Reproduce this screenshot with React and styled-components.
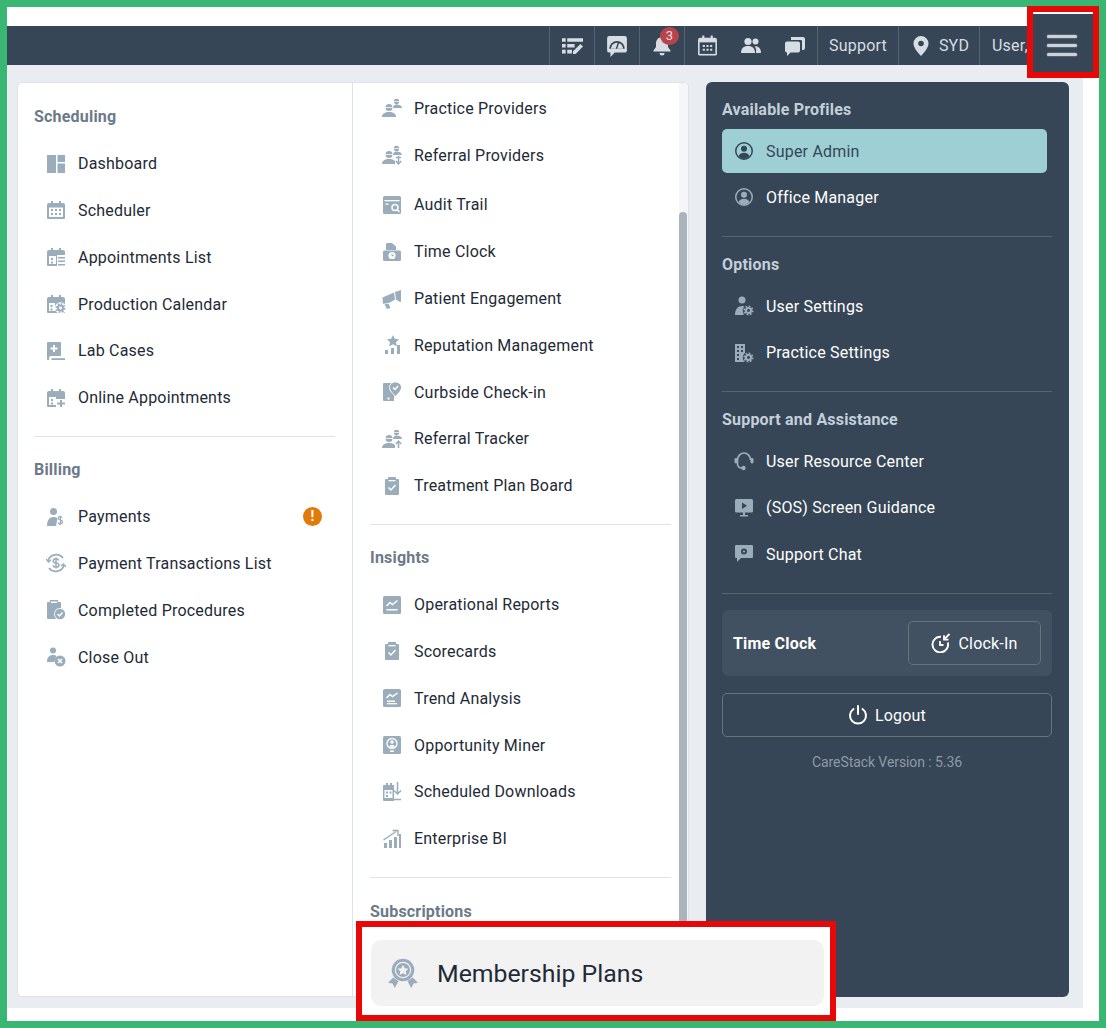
import React from 'react';
import styled, { createGlobalStyle } from 'styled-components';

const GlobalStyle = createGlobalStyle`
	* { box-sizing: border-box; }
	body {
		margin: 0;
		background: #fff;
		font-family: Roboto, "Liberation Sans", sans-serif;
		font-size: 16px;
		letter-spacing: 0.2px;
	}
`;

// cut-outs inside a glyph take the colour of whatever is behind the icon
const Cut = props => <rect fill="var(--cut)" {...props} />;
const CutPath = props => <path fill="var(--cut)" {...props} />;

const CalendarBase = () => (
	<>
		<path d="M1 5a2 2 0 0 1 2-2h14a2 2 0 0 1 2 2v13a1 1 0 0 1-1 1H2a1 1 0 0 1-1-1z" />
		<rect x="5" y="1" width="2" height="3" />
		<rect x="13" y="1" width="2" height="3" />
	</>
);

const Gear = ({ x, y, r = 4.6 }) => (
	<>
		<circle cx={x} cy={y} r={r + 1.2} fill="var(--cut)" />
		<circle cx={x} cy={y} r={r * 0.78} />
		<circle cx={x} cy={y} r={r * 0.9} fill="none" stroke="currentColor" strokeWidth="1.800" strokeDasharray="1.700 1.500" />
		<circle cx={x} cy={y} r={r * 0.32} fill="var(--cut)" />
	</>
);

const Providers = () => (
	<>
		<circle cx="7" cy="9.500" r="3.500" />
		<Cut x="2" y="9" width="10" height="0.800" />
		<path d="M0 19c0-3.500 3-5 7-5s7 1.500 7 5z" />
		<circle cx="14.500" cy="3.500" r="2.700" />
		<Cut x="10" y="3.100" width="10" height="0.700" />
		<path d="M11 10c0-2 1.500-3.500 3.500-3.500s5.500 1 5.500 3.500z" />
	</>
);

const glyphs = {
	dashboard: (
		<>
			<rect x="1" y="1" width="9" height="18" />
			<rect x="11.500" y="1" width="7.500" height="7" />
			<rect x="11.500" y="9.500" width="7.500" height="9.500" />
		</>
	),
	scheduler: (
		<>
			<CalendarBase />
			<Cut x="3" y="7.500" width="14" height="9.500" />
			<path d="M5 9h2v2H5zM9 9h2v2H9zM13 9h2v2h-2zM5 13h2v2H5zM9 13h2v2H9zM13 13h2v2h-2z" />
		</>
	),
	appointments: (
		<>
			<CalendarBase />
			<Cut x="3" y="9" width="7" height="8" />
			<Cut x="11" y="8" width="9" height="12" />
			<path d="M5 11h2v2H5zM5 14.500h2v2H5zM12 10h7v1.500h-7zM12 13.500h7V15h-7zM12 17h7v1.500h-7z" />
		</>
	),
	production: (
		<>
			<CalendarBase />
			<Cut x="3" y="9" width="6" height="8" />
			<path d="M4.500 11h2v2h-2zM4.500 14.500h2v2h-2z" />
			<Gear x="14.500" y="14" />
		</>
	),
	lab: (
		<>
			<path d="M1 2a1 1 0 0 1 1-1h12a1 1 0 0 1 1 1v13H5a2 2 0 0 0-2 2v2H2a1 1 0 0 1-1-1z" />
			<path d="M5.500 17.200h13.500V19H5.500z" />
			<CutPath d="M7 4h2v2.500h2.500v2H9V11H7V8.500H4.500v-2H7z" />
		</>
	),
	online: (
		<>
			<CalendarBase />
			<Cut x="3" y="9" width="7" height="8" />
			<Cut x="10" y="11" width="10" height="9" />
			<path d="M5 11h2v2H5zM5 14.500h2v2H5zM14 12h2v2.500h3v2h-3V19h-2v-2.500h-3v-2h3z" />
		</>
	),
	payments: (
		<>
			<circle cx="7.500" cy="4.500" r="3.500" />
			<path d="M1 19c0-6 2.500-9 6.500-9 1.800 0 3 .5 4 1.500L10 19z" />
			<path d="M16 10.500a2 2 0 0 0-3.800.500c0 2.300 4.300 1.500 4.300 4a2.200 2.200 0 0 1-4.300.500M14.500 9v9" fill="none" stroke="currentColor" strokeWidth="1.300" />
		</>
	),
	transactions: (
		<g fill="none" stroke="currentColor" strokeWidth="1.800">
			<path d="M2 8a8.500 8.500 0 0 1 15-3" />
			<path d="M18 12a8.500 8.500 0 0 1-15 3" />
			<path d="M12.800 7.500c-.5-1.200-1.500-1.700-2.800-1.700-1.500 0-2.800.8-2.800 2.100 0 3 5.800 1.300 5.800 4.200 0 1.300-1.300 2.100-3 2.100-1.400 0-2.500-.6-3-1.800M10 4.500v11" strokeWidth="1.500" />
			<path d="M0 6l2.500 3L5 7" strokeWidth="1.400" />
			<path d="M20 14l-2.500-3L15 13" strokeWidth="1.400" />
		</g>
	),
	completed: (
		<>
			<path d="M1 3a1 1 0 0 1 1-1h2V0h8v2h2a1 1 0 0 1 1 1v16H2a1 1 0 0 1-1-1z" />
			<Cut x="5" y="1.500" width="6" height="1.500" />
			<circle cx="14" cy="14" r="6" fill="var(--cut)" />
			<circle cx="14" cy="14" r="5.200" />
			<path d="M11.500 14l2 2 3-3.500" fill="none" stroke="var(--cut)" strokeWidth="1.400" />
		</>
	),
	closeout: (
		<>
			<circle cx="7" cy="3.500" r="3" />
			<path d="M1 15c0-5 2.500-7 6-7 1.500 0 2.500.3 3.500 1L8 15z" />
			<circle cx="14" cy="14" r="5.500" />
			<path d="M12 12l4 4M16 12l-4 4" stroke="var(--cut)" strokeWidth="1.500" />
		</>
	),
	practice: <Providers />,
	referral: (
		<>
			<Providers />
			<Cut x="13" y="10" width="7" height="10" />
			<path d="M16.500 11v8M13.800 16l2.700 3 2.700-3M14 12.500h5" fill="none" stroke="currentColor" strokeWidth="1.500" />
		</>
	),
	audit: (
		<>
			<rect x="1" y="1" width="18" height="18" rx="1.500" />
			<Cut x="2.500" y="5" width="15" height="1.300" />
			<Cut x="3.500" y="8.500" width="3" height="1.300" />
			<circle cx="13" cy="12.500" r="3" fill="none" stroke="var(--cut)" strokeWidth="1.500" />
			<path d="M15 14.500l2.500 2.500" stroke="var(--cut)" strokeWidth="1.500" />
		</>
	),
	timeclock: (
		<>
			<path d="M4 8V2a1 1 0 0 1 1-1h5l4 3.500V8z" />
			<rect x="1" y="8.500" width="18" height="10.500" rx="1.500" />
			<circle cx="10" cy="13.500" r="3.600" fill="var(--cut)" />
			<path d="M10 11.500v2.200h2" fill="none" stroke="currentColor" strokeWidth="1" />
		</>
	),
	engagement: (
		<>
			<path d="M19 1v11.500l-1 .500-4-2.500L13 3z" />
			<path d="M12 3.500l1 7-5 3-7 1.500-.500-6.500z" />
			<path d="M2.500 15.500l4-1 2 4.500-3.500 1z" />
		</>
	),
	reputation: (
		<>
			<path d="M11 0l1.800 3.800 4.200.5-3 2.900.8 4.200L11 9.300l-3.800 2.100.8-4.200-3-2.900 4.200-.5z" />
			<path d="M3 15h3v4H3zM9 13h3v6H9zM15 10h3v9h-3z" />
		</>
	),
	curbside: (
		<>
			<path d="M1 2a1 1 0 0 1 1-1h10v18H2a1 1 0 0 1-1-1z" />
			<rect x="5.500" y="15.500" width="2" height="2" fill="var(--cut)" />
			<path d="M13.500 0c3.500 0 6 2.500 6 5.500 0 3.500-3.500 6-6 9-2.500-3-6-5.500-6-9 0-3 2.500-5.500 6-5.500z" stroke="var(--cut)" strokeWidth="1" />
			<path d="M11 5.500l2 2 3-3.500" fill="none" stroke="var(--cut)" strokeWidth="1.400" />
		</>
	),
	tracker: (
		<>
			<Providers />
			<Cut x="13" y="10" width="7" height="10" />
			<path d="M16.500 19v-7M13.800 15l2.700-3 2.700 3" fill="none" stroke="currentColor" strokeWidth="1.500" />
		</>
	),
	clipboard: (
		<>
			<path d="M3 4a1 1 0 0 1 1-1h2V1h8v2h2a1 1 0 0 1 1 1v14a1 1 0 0 1-1 1H4a1 1 0 0 1-1-1z" />
			<Cut x="6.500" y="4" width="7" height="1.300" />
			<path d="M6.500 11.500l2.500 2.500 4.500-5" fill="none" stroke="var(--cut)" strokeWidth="1.500" />
		</>
	),
	reports: (
		<>
			<rect x="1" y="1" width="18" height="18" rx="1.500" />
			<path d="M4.500 11l3.500-3.500 2.500 2L15.500 5.500" fill="none" stroke="var(--cut)" strokeWidth="1.500" />
			<Cut x="4.500" y="14" width="11" height="1.500" />
		</>
	),
	trend: (
		<>
			<rect x="1" y="1" width="18" height="18" rx="1.500" />
			<path d="M4.500 10l3.500-3.500 2.500 2 5-3.500" fill="none" stroke="var(--cut)" strokeWidth="1.500" />
			<Cut x="5" y="12.500" width="8" height="1.500" />
			<Cut x="5" y="15" width="10" height="1.300" />
		</>
	),
	miner: (
		<>
			<rect x="1" y="1" width="18" height="18" rx="1.500" />
			<circle cx="10" cy="8.500" r="5" fill="none" stroke="var(--cut)" strokeWidth="1.300" />
			<circle cx="10" cy="7" r="1.800" fill="var(--cut)" />
			<path d="M7 12.500c.5-2 1.500-2.500 3-2.500s2.500.5 3 2.500zM8 15.500h4V17H8z" fill="var(--cut)" />
		</>
	),
	downloads: (
		<>
			<path d="M1 4a1 1 0 0 1 1-1h10v16H2a1 1 0 0 1-1-1z" />
			<rect x="4" y="1" width="2" height="3" />
			<rect x="8" y="1" width="2" height="3" />
			<Cut x="2.500" y="8" width="8" height="8" />
			<path d="M4 9.500h2v2H4zM7.500 9.500h2v2h-2zM4 13h2v2H4z" />
			<path d="M15.500 0v12M12 8.500l3.500 3.500L19 8.500M8 17.500h11" fill="none" stroke="currentColor" strokeWidth="1.500" />
		</>
	),
	bi: (
		<>
			<path d="M2 14h3v5H2zM7 11h3v8H7zM12 8h3v11h-3z" />
			<path d="M17 5h2v14h-2z" />
			<path d="M1.500 11L14 2.500M10.500 1.500H16V7" fill="none" stroke="currentColor" strokeWidth="1.400" />
		</>
	),
	profile: (
		<>
			<path fillRule="evenodd" d="M10 1a9 9 0 1 1 0 18 9 9 0 0 1 0-18zm0 1.500a7.500 7.500 0 1 0 0 15 7.500 7.500 0 0 0 0-15z" />
			<circle cx="10" cy="7.800" r="3" />
			<path d="M4.500 15c1.200-2.300 3.200-3.200 5.500-3.200s4.300.9 5.500 3.200A7.500 7.500 0 0 1 10 18a7.500 7.500 0 0 1-5.500-3z" />
		</>
	),
	usersettings: (
		<>
			<circle cx="8" cy="4" r="3.500" />
			<path d="M1 19c0-6 3-9 7-9 1.500 0 2.500.4 3.500 1L9.500 19z" />
			<Gear x="14.500" y="14.500" />
		</>
	),
	practicesettings: (
		<>
			<path d="M1 1h10v18H1z" />
			<path d="M3 3h2v2H3zM7 3h2v2H7zM3 7h2v2H3zM7 7h2v2H7zM3 11h2v2H3zM3 15h2v2H3z" fill="var(--cut)" />
			<Gear x="14.500" y="14.500" />
		</>
	),
	resource: (
		<>
			<path d="M3.500 9a6.500 7 0 0 1 13 0" fill="none" stroke="currentColor" strokeWidth="1.700" />
			<path d="M3.500 9v4a4 4 0 0 0 4 4h2" fill="none" stroke="currentColor" strokeWidth="1.700" />
			<rect x="0.500" y="7" width="3" height="5.500" rx="1.400" />
			<rect x="16.500" y="7" width="3" height="5.500" rx="1.400" />
			<circle cx="9.500" cy="17" r="2.200" />
		</>
	),
	screen: (
		<>
			<rect x="1" y="1" width="18" height="13.500" rx="1.500" />
			<path d="M8 4.500l5 3.200-5 3.200z" fill="var(--cut)" />
			<path d="M9 14h2v3h3v1.500H6V17h3z" />
		</>
	),
	chat: (
		<>
			<path d="M2 1h16a1 1 0 0 1 1 1v11a1 1 0 0 1-1 1H7l-4 4v-4H2a1 1 0 0 1-1-1V2a1 1 0 0 1 1-1z" />
			<circle cx="10" cy="7.500" r="3" fill="var(--cut)" />
			<circle cx="10" cy="7.500" r="1.100" />
		</>
	),
	table: (
		<>
			<path d="M0 3h3.500v3.500H0zM5 3h15v3.500H5zM0 8.500h3.500V12H0zM5 8.500h7V12H5zM0 14h3.500v3.500H0zM5 14h4.500v3.500H5z" />
			<path d="M10.500 15.500l7-7 2.500 2.500-7 7h-2.500z" />
		</>
	),
	gauge: (
		<>
			<path d="M3 1h14a2 2 0 0 1 2 2v11a2 2 0 0 1-2 2H8l-4 4v-4H3a2 2 0 0 1-2-2V3a2 2 0 0 1 2-2z" />
			<path d="M3 12.500a7 7 0 1 1 14 0z" fill="var(--cut)" />
			<path d="M4.500 12.500a5.500 5.500 0 1 1 11 0z" />
			<path d="M9.500 12.500l2-6" stroke="var(--cut)" strokeWidth="1.300" />
		</>
	),
	bell: (
		<>
			<path d="M10 1a6 6 0 0 1 6 6v4l2.500 3.500v1h-17v-1L4 11V7a6 6 0 0 1 6-6z" />
			<path d="M7.500 17h5a2.500 2.500 0 0 1-5 0z" />
		</>
	),
	calendar: (
		<>
			<path d="M1 4.500a2 2 0 0 1 2-2h14a2 2 0 0 1 2 2V18a1.500 1.500 0 0 1-1.500 1.500h-15A1.500 1.500 0 0 1 1 18z" />
			<rect x="5" y="0.500" width="2" height="3" />
			<rect x="13" y="0.500" width="2" height="3" />
			<Cut x="2.500" y="7" width="15" height="11" />
			<path d="M5.500 9.500h2v2h-2zM9 9.500h2v2H9zM12.500 9.500h2v2h-2zM5.500 13h2v2h-2zM9 13h2v2H9zM12.500 13h2v2h-2z" />
		</>
	),
	users: (
		<>
			<circle cx="7" cy="5.500" r="3.600" />
			<circle cx="14.500" cy="5.500" r="3" />
			<path d="M0 17c0-4.500 2.500-7 7-7s7 2.500 7 7z" />
			<path d="M15 17h5c0-4-1.800-6.500-5-6.800-.6 0-1 .1-1.300.3 1.300 1.500 1.800 3.800 1.300 6.500z" />
		</>
	),
	chats: (
		<>
			<path d="M6 1h12a2 2 0 0 1 2 2v9a2 2 0 0 1-2 2h-1V5a1 1 0 0 0-1-1H6z" />
			<path d="M2 5.500h11a2 2 0 0 1 2 2v7a2 2 0 0 1-2 2H5.500L2 20v-3.500a2 2 0 0 1-2-2v-7a2 2 0 0 1 2-2z" />
		</>
	),
	pin: (
		<>
			<path d="M10 0a7.500 7.500 0 0 1 7.500 7.500C17.500 12 13 16.500 10 20c-3-3.500-7.500-8-7.500-12.500A7.500 7.500 0 0 1 10 0z" />
			<circle cx="10" cy="7.500" r="2.800" fill="var(--cut)" />
		</>
	),
	clockin: (
		<g fill="none" stroke="currentColor">
			<path d="M16.800 9.500A7.800 7.800 0 1 1 10 3.800" strokeWidth="2" />
			<path d="M9 8v4h3.500" strokeWidth="1.800" />
			<path d="M18.500 1L13 6.500" strokeWidth="1.800" />
			<path d="M13 2.200v4.500h4.500" strokeWidth="1.800" />
		</g>
	),
	power: (
		<path d="M5.500 4A8 8 0 1 0 14.500 4M10 1v8" fill="none" stroke="currentColor" strokeWidth="2" strokeLinecap="round" />
	),
	award: (
		<>
			<circle cx="10" cy="8" r="7.500" />
			<circle cx="10" cy="8" r="5.500" fill="var(--cut)" />
			<circle cx="10" cy="8" r="4.700" />
			<path d="M10 4.500l1.100 2.300 2.500.3-1.800 1.700.5 2.500-2.300-1.200-2.300 1.200.5-2.500-1.800-1.700 2.500-.3z" fill="var(--cut)" />
			<path d="M3.500 13L0 16.500l3 .5 1.500 3 2.500-4.500zM16.500 13l3.500 3.500-3 .5-1.500 3-2.500-4.500z" />
		</>
	),
};

const GlyphSvg = styled.svg`
	display: block;
	flex: none;
	width: ${p => p.$size || 20}px;
	height: ${p => p.$size || 20}px;
	fill: currentColor;
	color: ${p => p.$color || '#9badba'};
	--cut: ${p => p.$cut || '#fff'};
`;

const Glyph = ({ name, size, color, cut }) => (
	<GlyphSvg viewBox="0 0 20 20" $size={size} $color={color} $cut={cut}>
		{glyphs[name]}
	</GlyphSvg>
);

const Frame = styled.div`
	position: relative;
	width: 1106px;
	height: 1028px;
	border: 7px solid #3ab673;
	background: #fff;
	display: flex;
	flex-direction: column;
`;

const TopBar = styled.header`
	flex: none;
	margin-top: 19px;
	height: 39px;
	padding-left: 542px;
	background: #364656;
	display: flex;
	color: #d6dde3;
	white-space: nowrap;
`;

const BarCell = styled.div`
	position: relative;
	flex: none;
	width: ${p => p.$width}px;
	padding-left: ${p => p.$inset || 0}px;
	border-left: ${p => (p.$plain ? 'none' : '1px solid #566573')};
	display: flex;
	align-items: center;
	justify-content: ${p => (p.$start ? 'flex-start' : 'center')};
	gap: 8px;
`;

const Badge = styled.span`
	position: absolute;
	left: 20px;
	top: 1px;
	width: 19px;
	height: 18px;
	border-radius: 50%;
	background: #b8444b;
	color: #f3dcdc;
	font-size: 13px;
	line-height: 18px;
	text-align: center;
`;

const Main = styled.main`
	flex: none;
	width: 1076px;
	height: 943px;
	padding: 17px 14px 11px 10px;
	background: #e9edf1;
	display: flex;
	gap: 17px;
`;

const MenuCard = styled.section`
	width: 672px;
	display: flex;
	background: #fff;
	border: 1px solid #dde3ea;
	border-radius: 5px;
	overflow: hidden;
`;

const LeftColumn = styled.div`
	flex: none;
	width: 334px;
	padding: 21.700px 17px 0 16px;
`;

const ScrollColumn = styled.div`
	position: relative;
	flex: 1;
	border-left: 1px solid #dde3ea;
	padding: 2px 17px 0 17px;
	overflow: hidden;
`;

const ScrollTrack = styled.div`
	position: absolute;
	top: 0;
	right: 0;
	bottom: 0;
	width: 9px;
	background: #f5f6f8;
`;

const ScrollThumb = styled.div`
	position: absolute;
	top: 129px;
	left: 0;
	right: 1px;
	bottom: 0;
	background: #a9b4bd;
	border-radius: 4px 4px 0 0;
`;

const Heading = styled.h3`
	margin: 0 0 ${p => p.$after ?? 11.6}px;
	font-size: 16px;
	line-height: 24px;
	font-weight: 700;
	color: ${p => (p.$dark ? '#c3cfd9' : '#6c7a88')};
`;

const Row = styled.div`
	display: flex;
	align-items: center;
	gap: 12px;
	height: ${p => p.$height || 46.8}px;
	margin-top: ${p => p.$top || 0}px;
	padding: 0 13px 0 12px;
	color: ${p => (p.$dark ? '#fff' : '#1e2a36')};
	font-size: 16px;
	white-space: nowrap;
`;

const Divider = styled.hr`
	margin: ${p => p.$before ?? 14.6}px 0 ${p => p.$after ?? 21}px;
	border: 0;
	border-top: 1px solid ${p => (p.$dark ? '#55646f' : '#dfe3ea')};
`;

const Alert = styled.span`
	margin-left: auto;
	width: 19px;
	height: 19px;
	border-radius: 50%;
	background: #e07b0a;
	color: #fff;
	font-size: 14px;
	font-weight: 700;
	line-height: 19px;
	text-align: center;
`;

const SidePanel = styled.aside`
	width: 363px;
	padding: 16px 17px 0 16px;
	background: #364656;
	border-radius: 6px;
	display: flex;
	flex-direction: column;
`;

const ProfileRow = styled.div`
	display: flex;
	align-items: center;
	gap: 12px;
	width: 325px;
	height: ${p => (p.$active ? 44 : 48)}px;
	padding: 0 12px;
	border-radius: 5px;
	background: ${p => (p.$active ? '#9ecfd5' : 'transparent')};
	color: ${p => (p.$active ? '#364656' : '#fff')};
`;

const ClockBox = styled.div`
	display: flex;
	align-items: center;
	justify-content: space-between;
	height: 66px;
	margin-top: 16px;
	padding: 0 11px;
	background: #415161;
	border-radius: 6px;
	color: #fff;
`;

const ClockLabel = styled.span`
	padding-top: 2px;
	font-weight: 700;
`;

const PanelButton = styled.div`
	display: flex;
	align-items: center;
	justify-content: center;
	gap: 7px;
	width: ${p => p.$width || '100%'};
	height: 44px;
	margin-top: ${p => p.$top || 0}px;
	padding-top: 1px;
	border: 1px solid #66747f;
	border-radius: 5px;
	color: #fff;
`;

const Version = styled.div`
	margin-top: 16px;
	color: #8d9aa6;
	font-size: 14px;
	line-height: 18px;
	letter-spacing: -0.08px;
	text-align: center;
`;

const MenuOverlay = styled.div`
	position: absolute;
	top: -1px;
	right: 0;
	width: 72px;
	height: 72px;
	border: 6px solid #e80808;
	background: linear-gradient(#fff 0 2px, #364656 2px);
	display: flex;
	flex-direction: column;
	justify-content: center;
	align-items: center;
	gap: 6px;
	padding: 6px 2px 0 0;
`;

const MenuLine = styled.span`
	width: 30px;
	height: 3px;
	border-radius: 2px;
	background: #ccd2d8;
	box-shadow: 0 0 1.500px #ccd2d8;
`;

const ZoomOverlay = styled.div`
	position: absolute;
	left: 349px;
	bottom: 0;
	width: 480px;
	height: 100px;
	border: 6px solid #e80808;
	background: #fff;
	padding: 13px 6px 9px 9px;
`;

const ZoomRow = styled.div`
	height: 100%;
	display: flex;
	align-items: center;
	gap: 19px;
	padding-left: 17px;
	background: #f2f2f2;
	border-radius: 10px;
	color: #1e2a36;
	font-size: 24.800px;
	letter-spacing: 0;
	white-space: nowrap;
`;

const schedulingItems = [
	['dashboard', 'Dashboard'],
	['scheduler', 'Scheduler'],
	['appointments', 'Appointments List'],
	['production', 'Production Calendar'],
	['lab', 'Lab Cases'],
	['online', 'Online Appointments'],
];

const billingItems = [
	['payments', 'Payments', true],
	['transactions', 'Payment Transactions List'],
	['completed', 'Completed Procedures'],
	['closeout', 'Close Out'],
];

const practiceItems = [
	['practice', 'Practice Providers'],
	['referral', 'Referral Providers'],
	['audit', 'Audit Trail', false, 3],
	['timeclock', 'Time Clock'],
	['engagement', 'Patient Engagement'],
	['reputation', 'Reputation Management'],
	['curbside', 'Curbside Check-in'],
	['tracker', 'Referral Tracker'],
	['clipboard', 'Treatment Plan Board'],
];

const insightItems = [
	['reports', 'Operational Reports'],
	['clipboard', 'Scorecards'],
	['trend', 'Trend Analysis'],
	['miner', 'Opportunity Miner'],
	['downloads', 'Scheduled Downloads'],
	['bi', 'Enterprise BI'],
];

const optionItems = [
	['usersettings', 'User Settings'],
	['practicesettings', 'Practice Settings'],
];

const supportItems = [
	['resource', 'User Resource Center'],
	['screen', '(SOS) Screen Guidance'],
	['chat', 'Support Chat'],
];

const MenuRows = ({ items }) =>
	items.map(([icon, label, alert, top]) => (
		<Row key={label} $top={top}>
			<Glyph name={icon} />
			{label}
			{alert && <Alert>!</Alert>}
		</Row>
	));

const PanelRows = ({ items }) =>
	items.map(([icon, label]) => (
		<Row key={label} $dark $height={46.5}>
			<Glyph name={icon} cut="#364656" color="#9badba" />
			{label}
		</Row>
	));

export default function App() {
	return (
		<Frame>
			<GlobalStyle />
			<TopBar>
				<BarCell $width={45}>
					<Glyph name="table" size={21} color="#d6dde3" cut="#364656" />
				</BarCell>
				<BarCell $width={45}>
					<Glyph name="gauge" size={22} color="#d6dde3" cut="#364656" />
				</BarCell>
				<BarCell $width={45}>
					<Glyph name="bell" color="#d6dde3" cut="#364656" />
					<Badge>3</Badge>
				</BarCell>
				<BarCell $width={45}>
					<Glyph name="calendar" size={21} color="#d6dde3" cut="#364656" />
				</BarCell>
				<BarCell $width={44} $plain>
					<Glyph name="users" color="#d6dde3" cut="#364656" />
				</BarCell>
				<BarCell $width={44} $plain>
					<Glyph name="chats" color="#d6dde3" cut="#364656" />
				</BarCell>
				<BarCell $width={81}>Support</BarCell>
				<BarCell $width={81} $inset={2}>
					<Glyph name="pin" color="#d6dde3" cut="#364656" />
					SYD
				</BarCell>
				<BarCell $width={70} $start $inset={12}>User,</BarCell>
			</TopBar>

			<Main>
				<MenuCard>
					<LeftColumn>
						<Heading>Scheduling</Heading>
						<MenuRows items={schedulingItems} />
						<Divider />
						<Heading>Billing</Heading>
						<MenuRows items={billingItems} />
					</LeftColumn>
					<ScrollColumn>
						<MenuRows items={practiceItems} />
						<Divider $before={15.1} />
						<Heading $after={11}>Insights</Heading>
						<MenuRows items={insightItems} />
						<Divider $before={15.2} $after={22} />
						<Heading>Subscriptions</Heading>
						<ScrollTrack>
							<ScrollThumb />
						</ScrollTrack>
					</ScrollColumn>
				</MenuCard>

				<SidePanel>
					<Heading $dark $after={7}>Available Profiles</Heading>
					<ProfileRow $active>
						<Glyph name="profile" color="#364656" />
						Super Admin
					</ProfileRow>
					<ProfileRow>
						<Glyph name="profile" color="#9badba" />
						Office Manager
					</ProfileRow>
					<Divider $dark $before={15} $after={16} />
					<Heading $dark $after={6}>Options</Heading>
					<PanelRows items={optionItems} />
					<Divider $dark $before={15} $after={16} />
					<Heading $dark $after={6}>Support and Assistance</Heading>
					<PanelRows items={supportItems} />
					<Divider $dark $before={15} $after={0} />
					<ClockBox>
						<ClockLabel>Time Clock</ClockLabel>
						<PanelButton $width="133px">
							<Glyph name="clockin" color="#fff" cut="#415161" />
							Clock-In
						</PanelButton>
					</ClockBox>
					<PanelButton $top={17}>
						<Glyph name="power" color="#fff" cut="#364656" />
						Logout
					</PanelButton>
					<Version>CareStack Version : 5.36</Version>
				</SidePanel>
			</Main>

			<MenuOverlay>
				<MenuLine />
				<MenuLine />
				<MenuLine />
			</MenuOverlay>

			<ZoomOverlay>
				<ZoomRow>
					<Glyph name="award" size={30} color="#9badba" cut="#f2f2f2" />
					Membership Plans
				</ZoomRow>
			</ZoomOverlay>
		</Frame>
	);
}
